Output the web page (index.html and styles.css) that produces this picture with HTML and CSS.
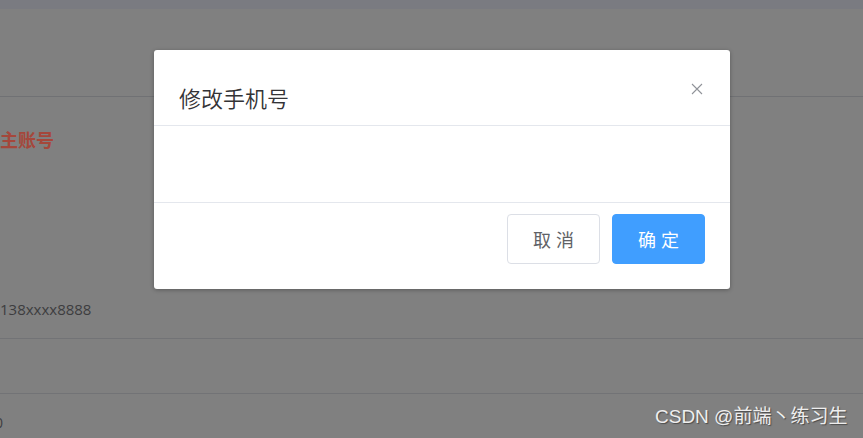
FILE: index.html
```html
<!DOCTYPE html>
<html lang="zh-CN">
<head>
<meta charset="utf-8">
<title>修改手机号</title>
<link rel="stylesheet" href="styles.css">
</head>
<body>
<div class="page">
  <div class="topbar"></div>
  <div class="header-area"></div>
  <div class="section">
    <div class="section-title">主账号</div>
  </div>
  <div class="row phone-row"><span class="phone">138xxxx8888</span></div>
  <div class="row empty-row"></div>
  <div class="row last-row"><span class="cut">0</span></div>

  <div class="dialog">
    <div class="dialog-header">
      <span class="dialog-title">修改手机号</span>
      <button class="close" aria-label="关闭">
        <svg width="12" height="12" viewBox="0 0 12 12"><path d="M1 1L11 11M11 1L1 11" stroke="#909399" stroke-width="1.1" fill="none"/></svg>
      </button>
    </div>
    <div class="dialog-body"></div>
    <div class="dialog-footer">
      <button class="btn btn-default">取消</button>
      <button class="btn btn-primary">确定</button>
    </div>
  </div>

  <div class="watermark">CSDN @前端丶练习生</div>
</div>
</body>
</html>
```

FILE: styles.css
```css
html, body {
  margin: 0;
  padding: 0;
}
body {
  background: #808080;
  font-family: "Noto Sans CJK SC", "Noto Sans", sans-serif;
  width: 863px;
  height: 438px;
  overflow: hidden;
}
.page {
  position: relative;
  width: 863px;
  height: 438px;
  overflow: hidden;
}
.topbar {
  height: 9px;
  background: #7a7b81;
}
.header-area {
  height: 87px;
  border-bottom: 1px solid #707174;
}
.section {
  height: 121px;
  padding-top: 29px;
  box-sizing: border-box;
}
.section-title {
  font-size: 18px;
  font-weight: bold;
  color: #a5473b;
  line-height: 26px;
}
.row {
  box-sizing: border-box;
}
.phone-row {
  height: 121px;
  padding-top: 78px;
  border-bottom: 1px solid #727376;
}
.phone {
  font-family: "Open Sans", "Noto Sans CJK SC", sans-serif;
  font-size: 15px;
  color: #3d3d3f;
  line-height: 20px;
}
.empty-row {
  height: 55px;
  border-bottom: 1px solid #727376;
}
.last-row {
  padding-top: 15px;
  overflow: hidden;
}
.cut {
  display: inline-block;
  margin-left: -5px;
  font-family: "Open Sans", sans-serif;
  font-size: 14px;
  color: #3d3d3f;
}
.dialog {
  position: absolute;
  left: 154px;
  top: 50px;
  width: 576px;
  height: 239px;
  background: #fff;
  border-radius: 3px;
  box-shadow: 0 1px 4px rgba(0,0,0,0.3);
  display: flex;
  flex-direction: column;
}
.dialog-header {
  position: relative;
  height: 76px;
  box-sizing: border-box;
  padding: 32px 25px 0;
  border-bottom: 1px solid #e4e7ed;
}
.dialog-title {
  font-size: 22px;
  line-height: 30px;
  color: #333336;
  font-weight: 350;
}
.close {
  position: absolute;
  top: 32px;
  right: 26px;
  width: 14px;
  height: 14px;
  padding: 1px;
  border: 0;
  background: none;
  display: flex;
  align-items: center;
  justify-content: center;
}
.dialog-body {
  height: 76px;
  border-bottom: 1px solid #e4e7ed;
}
.dialog-footer {
  flex: 1;
  display: flex;
  justify-content: flex-end;
  align-items: flex-start;
  gap: 12px;
  padding: 11px 25px 0;
}
.btn {
  width: 93px;
  height: 50px;
  border-radius: 4px;
  font-family: "Noto Sans CJK SC", sans-serif;
  font-size: 18px;
  letter-spacing: 5px;
  text-indent: 5px;
  padding: 0;
  box-sizing: border-box;
}
.btn-default {
  background: #fff;
  border: 1px solid #dcdfe6;
  color: #606266;
}
.btn-primary {
  background: #409eff;
  border: 1px solid #409eff;
  color: #fff;
}
.watermark {
  position: absolute;
  left: 655px;
  top: 404px;
  font-family: "Liberation Sans", "Noto Sans CJK SC", sans-serif;
  font-size: 19px;
  line-height: 26px;
  color: #eeeeee;
  text-shadow: 1px 1px 1px rgba(40,40,40,0.6);
}
```
